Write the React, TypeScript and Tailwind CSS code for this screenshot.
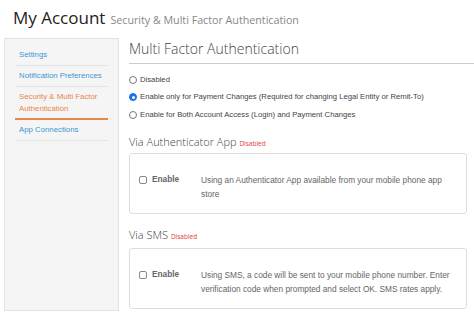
import React from "react";

const Radio = ({ checked, label }: { checked?: boolean; label: string }) => (
  <label className="flex items-center gap-[3px] h-[17.5px]">
    {checked ? (
      <span className="w-[8px] h-[8px] rounded-full bg-[#1a73e8] border border-[#1a73e8] flex items-center justify-center">
        <span className="w-[3px] h-[3px] rounded-full bg-white" />
      </span>
    ) : (
      <span className="w-[8px] h-[8px] rounded-full border border-[#777] bg-white" />
    )}
    <span>{label}</span>
  </label>
);

const Card = ({ text }: { text: React.ReactNode }) => (
  <div className="border border-[#ddd] rounded-[3px] mr-[7px] h-[61px] flex pt-[19px] pl-[9px]">
    <div className="flex items-start gap-[5px] w-[62px] font-bold text-[#666]">
      <span className="mt-[3px] w-[8px] h-[8px] border border-[#888] rounded-[2px] bg-white" />
      <span>Enable</span>
    </div>
    <div className="text-[#666] leading-[14px] pr-[8px]">{text}</div>
  </div>
);

export default function App() {
  return (
    <div className="w-[474px] h-[316px] bg-white overflow-hidden font-['Liberation_Sans',Arial,sans-serif]">
      <div className="flex items-baseline h-[38px] pl-[13px] pt-[4px] font-['Open_Sans',sans-serif]">
        <span className="text-[17px] text-[#222] leading-[28px]">My Account</span>
        <span className="text-[10.7px] text-[#888] ml-[5px]">Security &amp; Multi Factor Authentication</span>
      </div>
      <div className="flex">
        <div className="ml-[4px] w-[115px] h-[273px] bg-[#f5f5f5] border border-[#e3e3e3] px-[10px] pt-[6px] text-[7.8px]">
          <div className="border-b border-[#e4e4e4] pl-[4px] py-[5px] leading-[10px] text-[#3a95d4]">Settings</div>
          <div className="border-b border-[#e4e4e4] pl-[4px] py-[5px] leading-[10px] text-[#3a95d4]">Notification Preferences</div>
          <div className="border-b-2 border-[#e8874a] pl-[4px] py-[3.5px] text-[#e8874a] leading-[12px]">
            Security &amp; Multi Factor
            <br />
            Authentication
          </div>
          <div className="border-b border-[#e4e4e4] pl-[4px] py-[5px] leading-[10px] text-[#3a95d4]">App Connections</div>
        </div>
        <div className="flex-1 ml-[10px]">
          <div className="font-['Open_Sans',sans-serif] font-light text-[14px] text-[#444] border-b border-[#ccc] pb-[3px] leading-[22px]">
            Multi Factor Authentication
          </div>
          <div className="mt-[7px] text-[7.7px] text-[#444]">
            <Radio label="Disabled" />
            <Radio checked label="Enable only for Payment Changes (Required for changing Legal Entity or Remit-To)" />
            <Radio label="Enable for Both Account Access (Login) and Payment Changes" />
          </div>
          <div className="mt-[12px] font-['Open_Sans',sans-serif] font-light text-[11px] text-[#444] leading-[12px]">
            Via Authenticator App <span className="text-[6.5px] text-[#e53935] font-normal">Disabled</span>
          </div>
          <div className="mt-[3px] text-[8.3px]">
            <Card text={<>Using an Authenticator App available from your mobile phone app<br />store</>} />
          </div>
          <div className="mt-[15px] font-['Open_Sans',sans-serif] font-light text-[11px] text-[#444] leading-[12px]">
            Via SMS <span className="text-[6.5px] text-[#e53935] font-normal">Disabled</span>
          </div>
          <div className="mt-[5px] text-[8.3px]">
            <Card text={<>Using SMS, a code will be sent to your mobile phone number. Enter<br />verification code when prompted and select OK. SMS rates apply.</>} />
          </div>
        </div>
      </div>
    </div>
  );
}
